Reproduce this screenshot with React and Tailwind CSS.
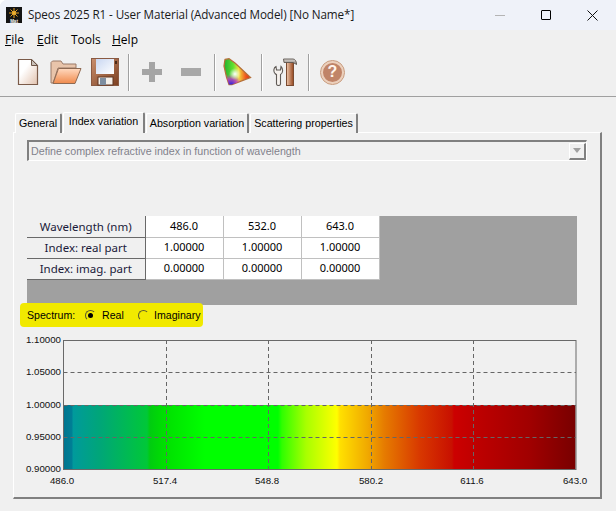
import React from "react";

const Sep = () => <div className="w-[2px] h-[37px] bg-[#a0a0a0] border-r border-white shrink-0" />;

const NewIcon = () => (
  <svg width="22" height="28" viewBox="0 0 22 28" className="shrink-0">
    <defs>
      <linearGradient id="ng" x1="0" y1="0" x2="1" y2="1">
        <stop offset="0.35" stopColor="#ffffff" />
        <stop offset="1" stopColor="#e2c2ae" />
      </linearGradient>
    </defs>
    <path d="M1.5 1.5H14.5L20.5 7.5V26.5H1.5Z" fill="url(#ng)" stroke="#7a5a48" strokeWidth="1.2" />
    <path d="M14.5 1.5V7.5H20.5Z" fill="#c9c0b8" stroke="#6d5648" />
  </svg>
);

const OpenIcon = () => (
  <svg width="32" height="25" viewBox="0 0 32 25" className="shrink-0">
    <defs>
      <linearGradient id="og" x1="0" y1="0" x2="0" y2="1">
        <stop offset="0" stopColor="#ffd9bf" />
        <stop offset="1" stopColor="#f08a4c" />
      </linearGradient>
    </defs>
    <path d="M1 23V2.5L2.5 1H11L13 4H26V8H8L3 23Z" fill="#e8c4aa" stroke="#9a7a68" />
    <path d="M3 23.5L8.5 8.5H31L25 23.5Z" fill="url(#og)" stroke="#8f6a52" />
  </svg>
);

const SaveIcon = () => (
  <svg width="28" height="28" viewBox="0 0 28 28" className="shrink-0">
    <defs>
      <linearGradient id="sg" x1="0" y1="0" x2="1" y2="1">
        <stop offset="0" stopColor="#c98f6e" />
        <stop offset="1" stopColor="#7c3f20" />
      </linearGradient>
      <linearGradient id="sl" x1="0" y1="0" x2="1" y2="1">
        <stop offset="0" stopColor="#c9d7f2" />
        <stop offset="1" stopColor="#ffffff" />
      </linearGradient>
    </defs>
    <rect x="0.5" y="0.5" width="27" height="27" fill="url(#sg)" stroke="#8a5a42" />
    <rect x="5" y="1" width="18" height="15" fill="url(#sl)" />
    <rect x="24" y="3" width="2" height="3" fill="#4a2a18" />
    <rect x="7" y="19" width="15" height="8" fill="#f4efe9" stroke="#5f3420" />
    <rect x="9" y="20" width="6" height="7" fill="#7e8ea0" />
  </svg>
);

const PlusIcon = () => (
  <svg width="20" height="20" viewBox="0 0 20 20" className="shrink-0">
    <path d="M7 0H13V7H20V13H13V20H7V13H0V7H7Z" fill="#a5a5a5" />
  </svg>
);

const MinusIcon = () => <div className="w-[20px] h-[8px] bg-[#a8a8a8] shrink-0" />;

const tri = "M2 1.5L6 0.7L12 5L27.5 19.5L9 26.5L6 26.5L3.5 19L1 8Z";

const ColorIcon = () => (
  <svg width="29" height="28" viewBox="0 0 29 28" className="shrink-0">
    <defs>
      <linearGradient id="c1" x1="0" y1="0" x2="1" y2="0">
        <stop offset="0" stopColor="#20b030" />
        <stop offset="0.35" stopColor="#60e030" />
        <stop offset="0.55" stopColor="#f0e040" />
        <stop offset="0.8" stopColor="#f06020" />
        <stop offset="1" stopColor="#e02010" />
      </linearGradient>
      <radialGradient id="c2" gradientUnits="userSpaceOnUse" cx="8" cy="27" r="11">
        <stop offset="0" stopColor="#2020e0" />
        <stop offset="0.55" stopColor="#c030d0" stopOpacity="0.8" />
        <stop offset="1" stopColor="#e040c0" stopOpacity="0" />
      </radialGradient>
      <radialGradient id="c3" gradientUnits="userSpaceOnUse" cx="12" cy="16" r="6">
        <stop offset="0" stopColor="#ffffff" />
        <stop offset="1" stopColor="#ffffff" stopOpacity="0" />
      </radialGradient>
    </defs>
    <path d={tri} fill="url(#c1)" stroke="#b4703a" strokeWidth="1.3" />
    <path d={tri} fill="url(#c2)" />
    <path d={tri} fill="url(#c3)" />
  </svg>
);

const ToolsIcon = () => (
  <svg width="24" height="28" viewBox="0 0 24 28" className="shrink-0">
    <defs>
      <linearGradient id="hd" x1="0" y1="0" x2="1" y2="0">
        <stop offset="0" stopColor="#efc8ac" />
        <stop offset="1" stopColor="#94461e" />
      </linearGradient>
      <linearGradient id="hh" x1="0" y1="0" x2="0" y2="1">
        <stop offset="0" stopColor="#d8d4d0" />
        <stop offset="1" stopColor="#8a827c" />
      </linearGradient>
    </defs>
    <rect x="13.5" y="4" width="7" height="23.5" fill="url(#hd)" stroke="#7a4a30" />
    <path d="M10.5 1H20C22 1 23.4 3 23.7 6.5L20 4.5H11Z" fill="url(#hh)" stroke="#5f5750" strokeWidth="0.9" />
    <path d="M3 8.5C0.6 9.6 0.2 13.5 2 15.5C2.5 16 3 16.3 3.5 16.5V26C3.5 28 7.5 28 7.5 26V16.5C10 15.5 10.4 11 8 8.5L7.5 12H3.5Z" fill="#f6f2ee" stroke="#5f5a56" strokeWidth="1.1" />
  </svg>
);

const HelpIcon = () => (
  <div className="w-[23px] h-[23px] rounded-full bg-[#c08468] border-2 border-[#ecd0bc] outline outline-1 outline-[#c89878] flex items-center justify-center shrink-0">
    <span className="text-[#fff4ec] font-bold text-[16px] leading-none font-['Liberation_Sans',sans-serif]">?</span>
  </div>
);

const Logo = () => (
  <svg width="16" height="16" viewBox="0 0 16 16" className="shrink-0">
    <rect width="16" height="16" fill="#141414" />
    <g stroke="#e8a020" strokeWidth="1">
      <path d="M8 1V11M3 6H13M4.5 2.5L11.5 9.5M11.5 2.5L4.5 9.5" />
    </g>
    <circle cx="8" cy="6" r="2" fill="#f0b030" />
    <text x="8" y="15.5" textAnchor="middle" fontSize="4.5" fontWeight="700" fill="#fff" fontFamily="Liberation Sans">Mat</text>
  </svg>
);

const Tab = ({ children, w, active }) => (
  <div
    className={
      active
        ? "h-[21px] bg-[#f0f0f0] border-t border-l border-white border-r-2 border-r-[#808080] rounded-t-[2px] flex justify-center pt-[1px] text-[10.7px] leading-[14px] whitespace-nowrap relative z-10 shrink-0 text-black"
        : "h-[20px] bg-[#f0f0f0] border-t border-l border-white border-r-2 border-r-[#808080] rounded-t-[2px] flex justify-center pt-[2px] text-[10.7px] leading-[14px] whitespace-nowrap shrink-0 text-black"
    }
    style={{ width: w }}
  >
    {children}
  </div>
);

const HeadCell = ({ children }) => (
  <td className="w-[118px] h-[21px] bg-[#f0f0f0] border-r border-b border-[#696969] text-center text-[11.5px] text-[#1a1a3a] p-0">{children}</td>
);
const Cell = ({ children }) => (
  <td className="w-[78px] h-[21px] bg-white border-r border-b border-[#c0c0c0] text-center text-[11px] text-black p-0">{children}</td>
);

const rows = [
  ["Wavelength (nm)", "486.0", "532.0", "643.0"],
  ["Index: real part", "1.00000", "1.00000", "1.00000"],
  ["Index: imag. part", "0.00000", "0.00000", "0.00000"],
];

const Radio = ({ checked }) => (
  <span className="w-[11px] h-[11px] rounded-full border border-[#5a5a30] border-b-transparent border-r-transparent flex items-center justify-center shrink-0">
    {checked && <span className="w-[5px] h-[5px] rounded-full bg-black" />}
  </span>
);

const Chart = () => {
  const xLabels = [
    ["486.0", 62],
    ["517.4", 165],
    ["548.8", 267],
    ["580.2", 371],
    ["611.6", 472],
    ["643.0", 575],
  ];
  const yLabels = [
    ["1.10000", 343],
    ["1.05000", 375],
    ["1.00000", 408],
    ["0.95000", 440],
    ["0.90000", 472],
  ];
  const stops = [
    [63, "#00748f"], [72, "#007f95"], [73, "#009a9c"], [100, "#00a678"], [147, "#00c838"], [150, "#00cc10"],
    [165, "#00e000"], [205, "#00ff00"], [278, "#00ff00"], [282, "#30ff00"], [306, "#a8ff00"], [337, "#ffff00"],
    [340, "#ffe000"], [368, "#f0a800"], [384, "#e67c00"], [420, "#d83800"], [452, "#c81000"], [454, "#cc0000"],
    [480, "#bc0000"], [530, "#a00000"], [576, "#780000"],
  ];
  return (
    <svg width="600" height="172" viewBox="0 330 600 172" className="block" fontFamily="Liberation Sans" fontSize="9.7">
      <defs>
        <linearGradient id="spec" gradientUnits="userSpaceOnUse" x1="63" y1="0" x2="576" y2="0">
          {stops.map(([x, c]) => (
            <stop key={x} offset={(x - 63) / 513} stopColor={c} />
          ))}
        </linearGradient>
      </defs>
      <rect x="63.5" y="405" width="512" height="64" fill="url(#spec)" />
      <g stroke="#666" strokeWidth="1" strokeDasharray="4 3">
        <path d="M63.5 372.5H576M63.5 405.5H576M63.5 437.5H576" />
        <path d="M166.5 340V469M268.5 340V469M371.5 340V469M473.5 340V469" />
      </g>
      <rect x="63.5" y="340.5" width="512.5" height="129" fill="none" stroke="#696969" />
      <g fill="#111" textAnchor="end">
        {yLabels.map(([t, y]) => (
          <text key={t} x="61" y={y}>{t}</text>
        ))}
      </g>
      <g fill="#111" textAnchor="middle">
        {xLabels.map(([t, x]) => (
          <text key={t} x={x} y="484">{t}</text>
        ))}
      </g>
    </svg>
  );
};

export default function App() {
  return (
    <div className="w-[616px] h-[511px] bg-white overflow-hidden">
      <div className="w-full h-full bg-[#f0f0f0] rounded-tl-[7px] flex flex-col overflow-hidden font-['Liberation_Sans',sans-serif]">
        <div className="h-[30px] shrink-0 bg-[#eff2f9] flex items-center pl-[6px] font-['Open_Sans',sans-serif] text-[11.7px] text-[#1a1a1a]">
          <Logo />
          <span className="ml-[6px] whitespace-nowrap tracking-[-0.1px] flex-1">Speos 2025 R1 - User Material (Advanced Model) [No Name*]</span>
          <div className="w-[46px] flex justify-center"><div className="w-[10px] h-px bg-[#b4b4b4]" /></div>
          <div className="w-[46px] flex justify-center"><div className="w-[10px] h-[10px] rounded-[1px] border border-black" /></div>
          <div className="w-[46px] flex justify-center mr-[1px]">
            <svg width="11" height="11" viewBox="0 0 11 11"><path d="M0.5 0.5L10.5 10.5M10.5 0.5L0.5 10.5" stroke="#111" /></svg>
          </div>
        </div>

        <div className="h-[20px] shrink-0 flex items-center pl-[5px] font-['Open_Sans',sans-serif] text-[12px] text-black">
          <span className="w-[32px]"><u>F</u>ile</span>
          <span className="w-[34px]"><u>E</u>dit</span>
          <span className="w-[41px]">Tools</span>
          <span><u>H</u>elp</span>
        </div>

        <div className="h-[47px] shrink-0 border-b border-[#a0a0a0] flex items-center pl-[17px] pb-[2px]">
          <NewIcon />
          <div className="ml-[11px]"><OpenIcon /></div>
          <div className="ml-[9px]"><SaveIcon /></div>
          <div className="ml-[9px]"><Sep /></div>
          <div className="ml-[12px]"><PlusIcon /></div>
          <div className="ml-[19px]"><MinusIcon /></div>
          <div className="ml-[13px]"><Sep /></div>
          <div className="ml-[7px]"><ColorIcon /></div>
          <div className="ml-[9px]"><Sep /></div>
          <div className="ml-[10px]"><ToolsIcon /></div>
          <div className="ml-[11px]"><Sep /></div>
          <div className="ml-[11px]"><HelpIcon /></div>
        </div>

        <div className="h-[15px] shrink-0" />

        <div className="flex items-end h-[21px] ml-[15px] gap-[1px] shrink-0 relative z-10 -mb-px">
          <Tab w="47px">General</Tab>
          <Tab w="82px" active>Index variation</Tab>
          <Tab w="103px">Absorption variation</Tab>
          <Tab w="108px">Scattering properties</Tab>
        </div>

        <div className="ml-[13px] w-[589px] h-[367px] shrink-0 border-t border-l border-white border-r-2 border-r-[#808080] border-b-2 border-b-[#808080] flex flex-col">
          <div className="mt-[7px] ml-[13px] w-[560px] h-[21px] shrink-0 border-t-2 border-l-2 border-[#808080] border-b border-r border-b-white border-r-white flex items-center justify-between text-[10.7px] text-[#82828c] pl-[2px]">
            <span>Define complex refractive index in function of wavelength</span>
            <div className="w-[17px] h-[17px] bg-[#f0f0f0] border-r-2 border-b-2 border-[#808080] border-t border-l border-t-white border-l-white flex items-center justify-center">
              <div className="w-0 h-0 border-l-[4px] border-r-[4px] border-t-[5px] border-l-transparent border-r-transparent border-t-[#a0a0a0]" />
            </div>
          </div>

          <div className="mt-[55px] ml-[13px] w-[550px] h-[89px] shrink-0 bg-[#a0a0a0]">
            <table className="border-collapse table-fixed font-['Noto_Sans',sans-serif]">
              <tbody>
                {rows.map((r) => (
                  <tr key={r[0]}>
                    <HeadCell>{r[0]}</HeadCell>
                    <Cell>{r[1]}</Cell>
                    <Cell>{r[2]}</Cell>
                    <Cell>{r[3]}</Cell>
                  </tr>
                ))}
              </tbody>
            </table>
          </div>

          <div className="mt-[-2px] ml-[6px] w-[183px] h-[24px] shrink-0 bg-[#f1e900] rounded-[4px] flex items-center pl-[7px] pt-[1px] text-[10.6px] text-black relative">
            <span className="w-[58px]">Spectrum:</span>
            <Radio checked />
            <span className="ml-[6px] w-[36px]">Real</span>
            <Radio />
            <span className="ml-[5px]">Imaginary</span>
          </div>

          <div className="mt-[3px]" style={{ marginLeft: "-14px" }}>
            <Chart />
          </div>
        </div>
      </div>
    </div>
  );
}
